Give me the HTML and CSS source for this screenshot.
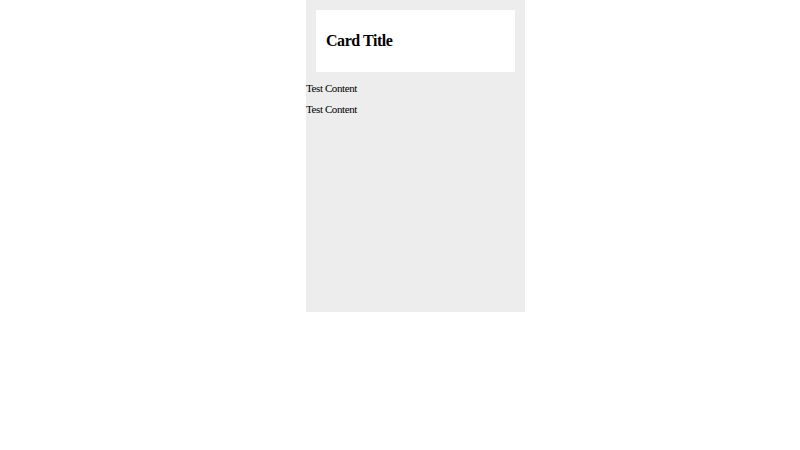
FILE: index.html
```html
<!DOCTYPE html>
<html>
<head>
<meta charset="utf-8">
<link rel="stylesheet" href="styles.css">
</head>
<body>
<div class="panel">
  <div class="card">
    <h2 class="card-title">Card Title</h2>
  </div>
  <p class="content">Test Content</p>
  <p class="content">Test Content</p>
</div>
</body>
</html>
```
FILE: styles.css
```css
html, body {
  margin: 0;
  padding: 0;
  background: #ffffff;
}
body {
  font-family: "Liberation Serif", "Times New Roman", serif;
  color: #000;
}
.panel {
  margin-left: 306px;
  width: 219px;
  height: 312px;
  background: #ededed;
  padding-top: 10px;
  box-sizing: border-box;
}
.card {
  margin: 0 10px;
  background: #ffffff;
  height: 62px;
  padding: 0 10px;
  box-sizing: border-box;
  display: flex;
  align-items: center;
}
.card-title {
  margin: 0;
  font-size: 16px;
  letter-spacing: -0.45px;
  font-weight: bold;
}
.content {
  margin: 9px 0 0 0;
  font-size: 11px;
  letter-spacing: -0.4px;
  line-height: 14px;
}
.content + .content {
  margin-top: 7px;
}
```
